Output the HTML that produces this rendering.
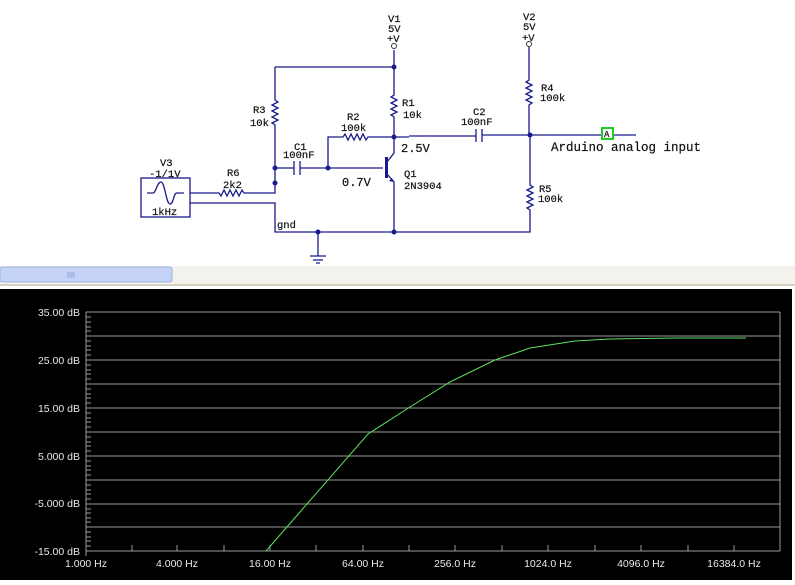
<!DOCTYPE html>
<html><head><style>
body{margin:0;width:795px;height:585px;overflow:hidden;background:#fff;position:relative;font-family:"Liberation Sans",sans-serif}
svg{position:absolute;left:0;top:0}
</style></head><body>
<svg width="795" height="585" viewBox="0 0 795 585">
<rect x="0" y="0" width="795" height="266" fill="#fff"/>
<g stroke="#1a1a8c" stroke-width="1.3" fill="none">
<path d="M394 50V67M275 67H394M394 67V95l-3 2 6 3-6 3 6 3-6 3 6 3-6 3 3 2V137H409"/>
<path d="M275 67V100l3 2-6 3 6 3-6 3 6 3-6 3 6 3-6 3 3 2V193H244l-2-3-3 6-3-6-3 6-3-6-3 6-3-6-3 6-2-3H190"/>
<path d="M190 203H275V232H530V210l-3-2 6-3-6-3 6-3-6-3 6-3-6-3 6-3-3-2V135"/>
<path d="M275 168H294M294 161V175M300 161V175M300 168H383"/>
<path d="M328 168V137H343l2-3 3 6 3-6 3 6 3-6 3 6 3-6 3 6 2-3H394"/>
<path d="M394 137V153L387 162M387 174L394 182V232"/>
<path d="M409 136H476M476 129V142M482 129V142M482 135H636"/>
<path d="M529 47V80l-3 2 6 3-6 3 6 3-6 3 6 3-6 3 6 3-3 2V135"/>
<path d="M318 232V256M310 256H326M313 260H323M316 263H320"/>
</g>
<rect x="385" y="157" width="3" height="21" fill="#1a1a8c"/>
<path d="M394 182l-5-1 3-3z" fill="#1a1a8c"/>
<g fill="#1a1a8c">
<circle cx="394" cy="67" r="2.5"/><circle cx="394" cy="137" r="2.5"/><circle cx="275" cy="168" r="2.5"/><circle cx="275" cy="183" r="2.5"/><circle cx="328" cy="168" r="2.5"/><circle cx="318" cy="232" r="2.5"/><circle cx="394" cy="232" r="2.5"/><circle cx="530" cy="135" r="2.5"/>
</g>
<circle cx="394" cy="46" r="2.5" fill="#fff" stroke="#333" stroke-width="1"/>
<circle cx="529" cy="44" r="2.5" fill="#fff" stroke="#333" stroke-width="1"/>
<rect x="141" y="178" width="49" height="39" fill="#fff" stroke="#1a1a8c" stroke-width="1.3"/>
<path d="M147 193H153C156 193 157 182 161 182S166 204 170 204S173 193 177 193H184" stroke="#1a1a8c" stroke-width="1.3" fill="none"/>
<rect x="602" y="128" width="11" height="11" fill="#fff" stroke="#22cc22" stroke-width="2"/>
<g font-family="Liberation Mono,monospace" font-size="10.5" fill="#111" stroke="#111" stroke-width="0.2">
<text x="388" y="22">V1</text><text x="388" y="32">5V</text><text x="387" y="42">+V</text>
<text x="523" y="20">V2</text><text x="523" y="30">5V</text><text x="522" y="41">+V</text>
<text x="253" y="113">R3</text><text x="250" y="126">10k</text>
<text x="402" y="106">R1</text><text x="403" y="118">10k</text>
<text x="347" y="120">R2</text><text x="341" y="131">100k</text>
<text x="294" y="150">C1</text><text x="283" y="158">100nF</text>
<text x="401" y="152" font-size="12">2.5V</text>
<text x="342" y="186" font-size="12">0.7V</text>
<text x="404" y="177">Q1</text><text x="404" y="189">2N3904</text>
<text x="160" y="166">V3</text><text x="149" y="177">-1/1V</text>
<text x="152" y="215">1kHz</text>
<text x="227" y="176">R6</text><text x="223" y="188">2k2</text>
<text x="277" y="228">gnd</text>
<text x="473" y="115">C2</text><text x="461" y="125">100nF</text>
<text x="541" y="91">R4</text><text x="540" y="101">100k</text>
<text x="539" y="192">R5</text><text x="538" y="202">100k</text>
<text x="604" y="137" font-size="9">A</text>
<text x="551" y="151" font-size="12.5">Arduino analog input</text>
</g>
<rect x="0" y="266" width="795" height="18" fill="#f3f2ec"/>
<rect x="0" y="267" width="172" height="15" rx="2" fill="#c4d3f5" stroke="#9fb3e0"/>
<path d="M68 272v6M70 272v6M72 272v6M74 272v6" stroke="#8fa6da"/>
<rect x="0" y="284" width="795" height="2" fill="#d6d2c2"/>
<rect x="0" y="286" width="795" height="3" fill="#fff"/>
<rect x="0" y="289" width="792" height="291" fill="#000"/>
<g stroke="#9a9a9a" stroke-width="1">
<path d="M86 312H780M86 336H780M86 360H780M86 384H780M86 408H780M86 432H780M86 456H780M86 480H780M86 504H780M86 527H780M86 551H780M86 312V551M780 312V551"/>
<path d="M86 317h5M86 322h5M86 327h5M86 331h5M86 341h5M86 346h5M86 350h5M86 355h5M86 365h5M86 370h5M86 374h5M86 379h5M86 389h5M86 394h5M86 398h5M86 403h5M86 413h5M86 418h5M86 422h5M86 427h5M86 437h5M86 442h5M86 446h5M86 451h5M86 461h5M86 466h5M86 470h5M86 475h5M86 485h5M86 490h5M86 494h5M86 499h5M86 509h5M86 513h5M86 518h5M86 522h5M86 532h5M86 537h5M86 541h5M86 546h5"/>
<path d="M86 551v5M132 551v-6M177 551v-6M224 551v-6M270 551v-6M316 551v-6M363 551v-6M409 551v-6M455 551v-6M502 551v-6M548 551v-6M595 551v-6M641 551v-6M688 551v-6M734 551v-6"/>
</g>
<path d="M266 551L300 512L368 434L410 407L450 382L495 360L530 348L575 341L610 339L680 338L746 338" stroke="#5ee05e" stroke-width="1" fill="none"/>
<g fill="#e8e8e8" font-size="10.5" font-family="Liberation Sans,sans-serif">
<text x="80" y="316" text-anchor="end">35.00 dB</text>
<text x="80" y="364" text-anchor="end">25.00 dB</text>
<text x="80" y="412" text-anchor="end">15.00 dB</text>
<text x="80" y="460" text-anchor="end">5.000 dB</text>
<text x="80" y="507" text-anchor="end">-5.000 dB</text>
<text x="80" y="555" text-anchor="end">-15.00 dB</text>
<g text-anchor="middle">
<text x="86" y="567">1.000 Hz</text><text x="177" y="567">4.000 Hz</text><text x="270" y="567">16.00 Hz</text><text x="363" y="567">64.00 Hz</text><text x="455" y="567">256.0 Hz</text><text x="548" y="567">1024.0 Hz</text><text x="641" y="567">4096.0 Hz</text><text x="734" y="567">16384.0 Hz</text>
</g></g>
</svg>
</body></html>
